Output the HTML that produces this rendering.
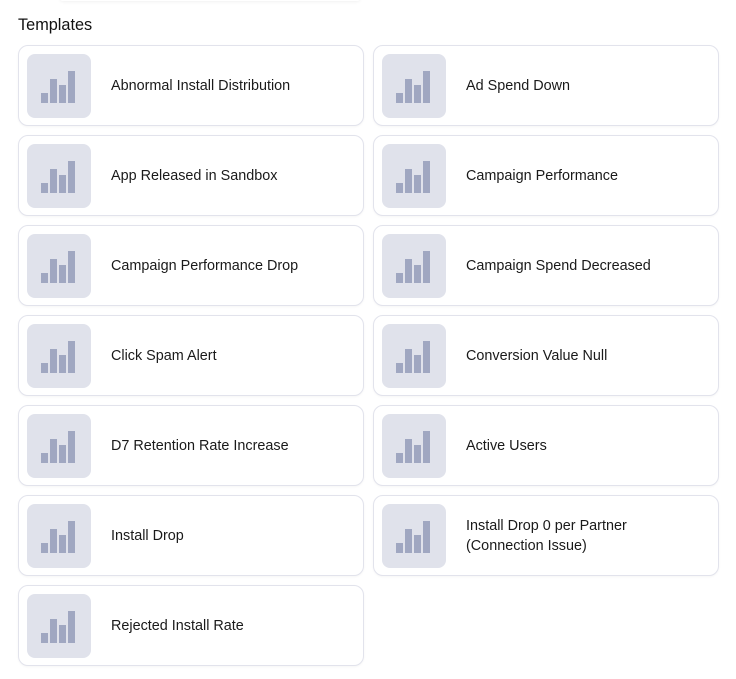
<!DOCTYPE html><html><head><style>
body{margin:0;background:#fff;font-family:"Liberation Sans",Arial,sans-serif;width:736px;height:679px;position:relative;overflow:hidden}
.top{position:absolute;left:60px;top:-4px;width:300px;height:5px;border-radius:4px;box-shadow:0 1px 3px rgba(0,0,0,.06)}
h1{position:absolute;left:18px;top:16px;margin:0;font-size:16.3px;font-weight:normal;color:#111}
.c{position:absolute;width:344px;height:79px;border:1px solid #e2e3ec;border-radius:10px;box-shadow:0 1px 2px rgba(0,0,0,.04);background:#fff}
.ic{position:absolute;left:8px;top:8px;width:64px;height:64px;background:#e0e2eb;border-radius:8px}
.b{position:absolute;width:7px;bottom:15px;background:#a0a7c1}
.t{position:absolute;left:92px;top:0;height:79px;display:flex;align-items:center;font-size:14.4px;color:#1a1a1a;line-height:20px}
</style></head><body>
<div class="top"></div>
<h1>Templates</h1>
<div id="g"></div>
<script>
var n=["Abnormal Install Distribution","Ad Spend Down","App Released in Sandbox","Campaign Performance","Campaign Performance Drop","Campaign Spend Decreased","Click Spam Alert","Conversion Value Null","D7 Retention Rate Increase","Active Users","Install Drop","Install Drop 0 per Partner<br>(Connection Issue)","Rejected Install Rate"];
var h='';n.forEach(function(s,i){var x=i%2?373:18,y=45+Math.floor(i/2)*90;
h+='<div class="c" style="left:'+x+'px;top:'+y+'px"><div class="ic"><div class="b" style="left:14px;height:10px"></div><div class="b" style="left:23px;height:24px"></div><div class="b" style="left:32px;height:18px"></div><div class="b" style="left:41px;height:32px"></div></div><div class="t">'+s+'</div></div>';});
document.getElementById('g').innerHTML=h;
</script>
</body></html>
